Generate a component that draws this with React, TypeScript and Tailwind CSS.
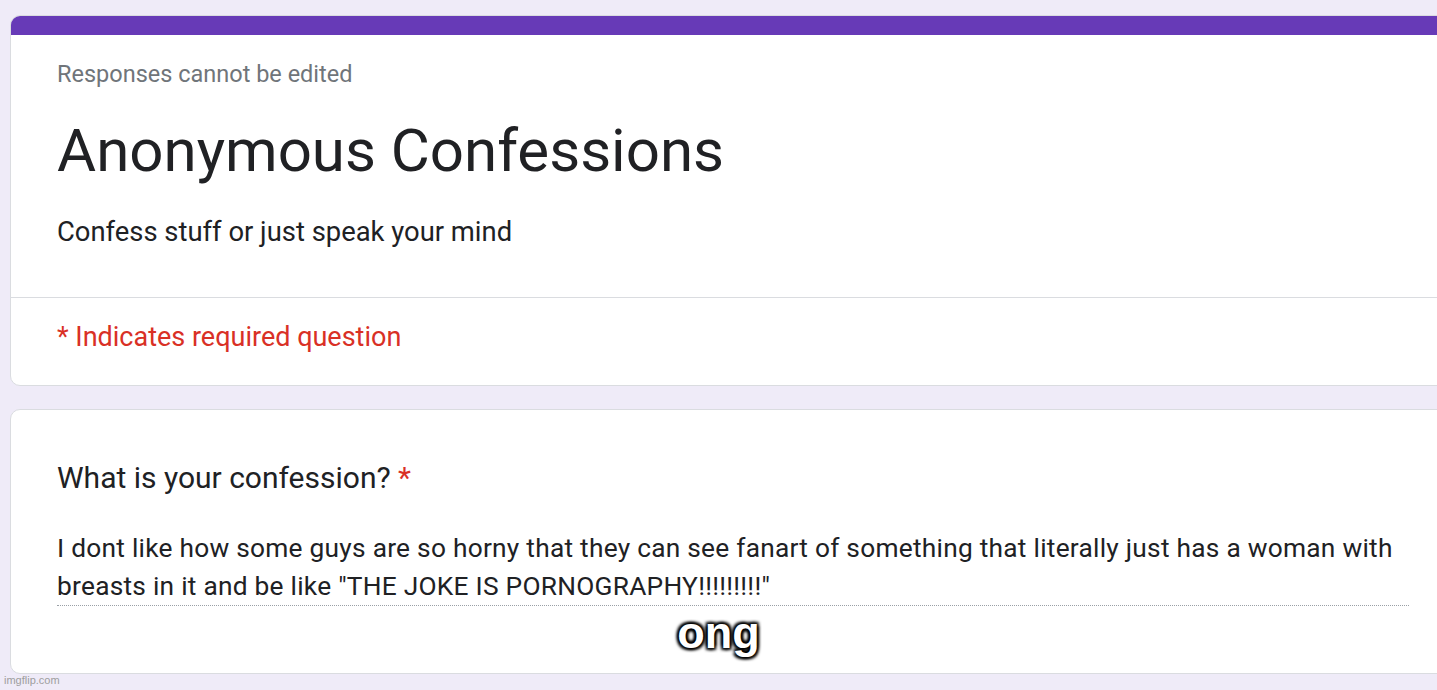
export default function App() {
    return (
        <div className="relative h-[690px] w-[1437px] overflow-hidden bg-[#efebf8] font-['Roboto',sans-serif]">
            <div className="flex w-[1460px] flex-col gap-[23px] pl-[10px] pt-[15px]">
                {/* header card */}
                <div className="overflow-hidden rounded-[10px] border border-[#dadce0] bg-white">
                    <div className="h-[19px] bg-[#673ab7]" />
                    <div className="px-[46px] pb-[47px] pt-[24px]">
                        <div className="text-[23.5px] leading-[30px] text-[#70757a]">
                            Responses cannot be edited
                        </div>
                        <h1 className="mt-[27px] text-[60px] leading-[70px] text-[#202124]">
                            Anonymous Confessions
                        </h1>
                        <div className="mt-[28px] text-[27.4px] leading-[36px] text-[#202124]">
                            Confess stuff or just speak your mind
                        </div>
                    </div>
                    <div className="border-t border-[#dadce0] px-[46px] pb-[30px] pt-[21px]">
                        <div className="text-[27px] leading-[36px] text-[#d93025]">
                            * Indicates required question
                        </div>
                    </div>
                </div>

                {/* question card */}
                <div className="rounded-[10px] border border-[#dadce0] bg-white px-[46px] pb-[67px] pt-[48px]">
                    <div className="text-[30px] leading-[40px] text-[#202124]">
                        What is your confession? <span className="text-[#d93025]">*</span>
                    </div>
                    <div className="mt-[31px] w-[1352px] border-b border-dotted border-[#9aa0a6] text-[26.3px] leading-[38px] tracking-[0.25px] text-[#202124]">
                        I dont like how some guys are so horny that they can see fanart of something that literally just has a
                        woman with breasts in it and be like "THE JOKE IS PORNOGRAPHY!!!!!!!!!"
                    </div>
                </div>
            </div>

            {/* meme caption */}
            <div className="absolute left-0 top-[606px] w-[1437px] text-center font-['Liberation_Sans',Arial,sans-serif] text-[45px] font-bold leading-[54px] text-white [text-shadow:2px_2px_3px_#000,-2px_-2px_3px_#000,2px_-2px_3px_#000,-2px_2px_3px_#000]">
                ong
            </div>

            {/* watermark */}
            <div className="absolute bottom-[3px] left-[4px] font-['Liberation_Sans',Arial,sans-serif] text-[11px] leading-[13px] text-[#9e9e9e]">
                imgflip.com
            </div>
        </div>
    );
}
